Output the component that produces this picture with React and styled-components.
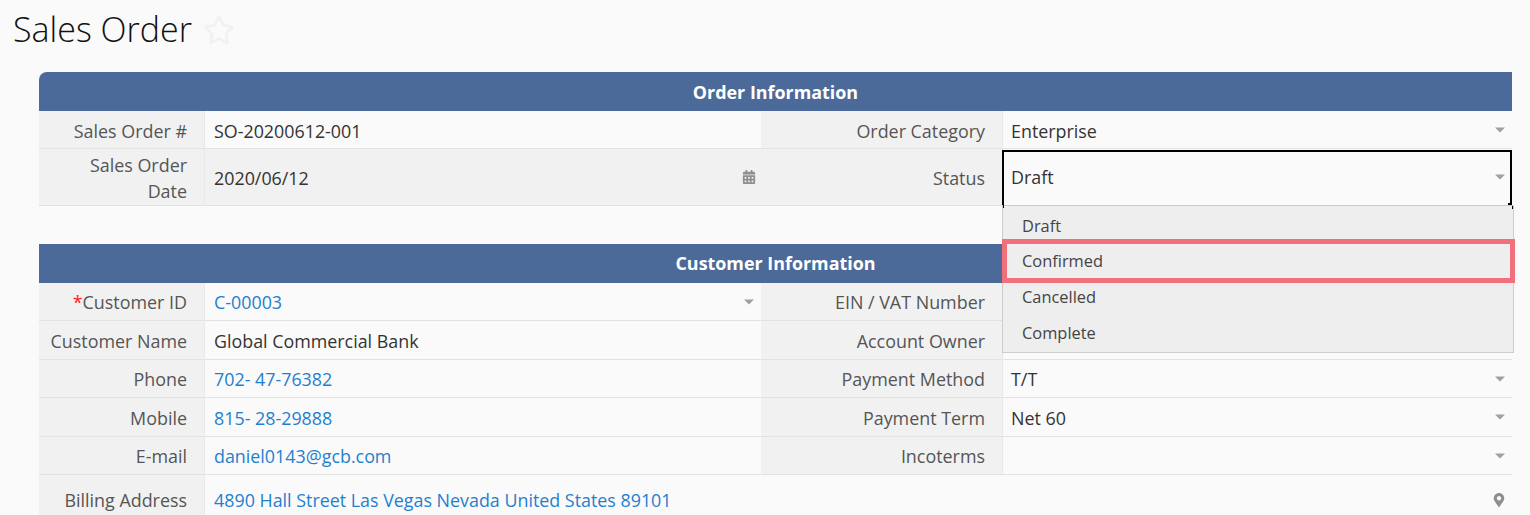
import React from "react";
import styled, { createGlobalStyle } from "styled-components";
import { FaRegStar, FaCalendarAlt, FaMapMarkerAlt } from "react-icons/fa";

const GlobalStyle = createGlobalStyle`
  html, body {
    margin: 0;
    height: 515px;
    overflow: hidden;
    background: #fafafa;
    font-family: "Open Sans", "Liberation Sans", sans-serif;
  }
`;

const Page = styled.div`
  width: 1530px;
  height: 515px;
  overflow: hidden;
`;

const TitleBar = styled.div`
  display: flex;
  align-items: center;
  height: 72px;
  padding: 0 0 14px 13px;
  box-sizing: border-box;
`;

const Title = styled.h1`
  margin: 0;
  font-size: 34px;
  font-weight: 300;
  color: #111;
  line-height: 58px;
`;

const Star = styled(FaRegStar)`
  margin: 2px 0 0 11px;
  width: 32px;
  height: 30px;
  color: #f1f1f1;
`;

const FormWrap = styled.div`
  position: relative;
  margin: 0 18px 0 39px;
`;

const Section = styled.section`
  margin-bottom: 38px;
`;

const SectionHeader = styled.div`
  height: 39px;
  line-height: ${(p) => (p.$rounded ? 41 : 39)}px;
  background: #4c6a99;
  color: #fff;
  font-size: 17.9px;
  font-weight: 700;
  text-align: center;
  border-radius: ${(p) => (p.$rounded ? "8px 0 0 0" : "0")};
`;

const Grid = styled.div`
  display: grid;
  grid-template-columns: 165px 557px 241px 510px;
`;

const Label = styled.div`
  display: flex;
  align-items: center;
  justify-content: flex-end;
  box-sizing: border-box;
  height: ${(p) => p.$height}px;
  padding: ${(p) => p.$top ?? 1}px 17px 0 10px;
  background: #f1f1f1;
  border-bottom: 1px solid #e2e2e2;
  color: #555;
  font-size: 17.9px;
  line-height: 26px;
  text-align: right;
`;

const Required = styled.span`
  color: #f22;
`;

const Value = styled.div`
  position: relative;
  display: flex;
  align-items: center;
  box-sizing: border-box;
  height: ${(p) => p.$height}px;
  padding: ${(p) => p.$top ?? 1}px 8px 0 ${(p) => (p.$first ? 9 : 8)}px;
  grid-column: ${(p) => (p.$wide ? "span 3" : "auto")};
  background: ${(p) => (p.$shaded ? "#f1f1f1" : "#fafafa")};
  border-bottom: 1px solid #e2e2e2;
  border-left: 1px solid #e8e8e8;
  color: ${(p) => (p.$link ? "#1f80cf" : "#333")};
  font-size: 17.88px;
  white-space: nowrap;
`;

const IconSlot = styled.span`
  position: absolute;
  right: ${(p) => p.$right ?? 5}px;
  top: 50%;
  transform: translateY(-50%);
  display: flex;
  color: #8f8f8f;
  font-size: 14px;
`;

const Caret = styled.span`
  display: block;
  width: 0;
  height: 0;
  border-left: 5px solid transparent;
  border-right: 5px solid transparent;
  border-top: 5px solid #a0a0a0;
`;

const Focus = styled.div`
  position: absolute;
  inset: 1px 0 0 -1px;
  border: 2px solid #000;
  border-bottom: 0;
  pointer-events: none;
  z-index: 4;

  &::after {
    content: "";
    position: absolute;
    right: -2px;
    bottom: 0;
    width: 4px;
    height: 2px;
    background: #000;
  }

  &::before {
    content: "";
    position: absolute;
    right: -3px;
    bottom: -4px;
    width: 1px;
    height: 3px;
    background: #000;
    box-shadow: -509px -1px 0 #000;
  }
`;

const Menu = styled.ul`
  position: absolute;
  left: 963px;
  top: 133px;
  width: 512px;
  margin: 0;
  padding: 1px 0 0;
  box-sizing: border-box;
  height: 148px;
  list-style: none;
  background: #eee;
  border: 1px solid #ccc;
  z-index: 2;
`;

const MenuItem = styled.li`
  height: 36px;
  line-height: 36px;
  padding-left: 19px;
  color: #444;
  font-size: 16.4px;

  &:first-child {
    line-height: 38px;
  }
`;

const Highlight = styled.div`
  position: absolute;
  left: 963px;
  top: 167px;
  width: 513px;
  height: 44px;
  box-sizing: border-box;
  border: 5px solid #f2707b;
  z-index: 3;
`;

const customerRows = [
  { height: 38, left: "Customer ID", required: true, value: "C-00003", link: true, caret: true, right: "EIN / VAT Number", rightValue: "" },
  { height: 39, left: "Customer Name", value: "Global Commercial Bank", right: "Account Owner", rightValue: "" },
  { height: 38, left: "Phone", value: "702- 47-76382", link: true, right: "Payment Method", rightValue: "T/T", rightCaret: true },
  { height: 39, left: "Mobile", value: "815- 28-29888", link: true, right: "Payment Term", rightValue: "Net 60", rightCaret: true },
  { height: 38, left: "E-mail", value: "daniel0143@gcb.com", link: true, right: "Incoterms", rightValue: "", rightCaret: true },
];

export default function App() {
  return (
    <Page>
      <GlobalStyle />
      <TitleBar>
        <Title>Sales Order</Title>
        <Star />
      </TitleBar>
      <FormWrap>
        <Section>
          <SectionHeader $rounded>Order Information</SectionHeader>
          <Grid>
            <Label $height={38} $top={3}>Sales Order #</Label>
            <Value $first $height={38} $top={3}>SO-20200612-001</Value>
            <Label $height={38} $top={3}>Order Category</Label>
            <Value $height={38} $top={3}>
              Enterprise
              <IconSlot $right={7}><Caret /></IconSlot>
            </Value>
            <Label $height={57}>Sales Order Date</Label>
            <Value $first $shaded $height={57}>
              2020/06/12
              <IconSlot><FaCalendarAlt /></IconSlot>
            </Value>
            <Label $height={57}>Status</Label>
            <Value $height={57} $top={0}>
              Draft
              <IconSlot $right={7}><Caret /></IconSlot>
              <Focus />
            </Value>
          </Grid>
        </Section>
        <Section>
          <SectionHeader>Customer Information</SectionHeader>
          <Grid>
            {customerRows.map((row) => (
              <React.Fragment key={row.left}>
                <Label $height={row.height}>
                  {row.required && <Required>*</Required>}
                  {row.left}
                </Label>
                <Value $first $height={row.height} $link={row.link}>
                  {row.value}
                  {row.caret && <IconSlot $right={7}><Caret /></IconSlot>}
                </Value>
                <Label $height={row.height}>{row.right}</Label>
                <Value $height={row.height}>
                  {row.rightValue}
                  {row.rightCaret && <IconSlot $right={7}><Caret /></IconSlot>}
                </Value>
              </React.Fragment>
            ))}
            <Label $height={50}>Billing Address</Label>
            <Value $first $wide $link $height={50}>
              4890 Hall Street Las Vegas Nevada United States 89101
              <IconSlot $right={6}><FaMapMarkerAlt /></IconSlot>
            </Value>
          </Grid>
        </Section>
        <Menu>
          <MenuItem>Draft</MenuItem>
          <MenuItem>Confirmed</MenuItem>
          <MenuItem>Cancelled</MenuItem>
          <MenuItem>Complete</MenuItem>
        </Menu>
        <Highlight />
      </FormWrap>
    </Page>
  );
}
